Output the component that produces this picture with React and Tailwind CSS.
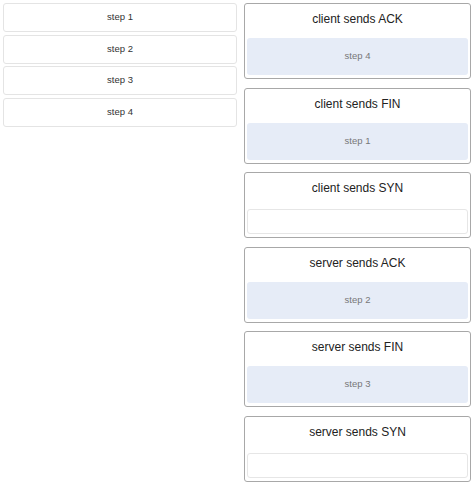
import React from "react";

const leftItems = ["step 1", "step 2", "step 3", "step 4"];
const cards = [
  { title: "client sends ACK", step: "step 4" },
  { title: "client sends FIN", step: "step 1" },
  { title: "client sends SYN", step: null },
  { title: "server sends ACK", step: "step 2" },
  { title: "server sends FIN", step: "step 3" },
  { title: "server sends SYN", step: null },
];

export default function App() {
  return (
    <div
      className="w-[474px] h-[484px] bg-white flex items-start gap-[7px] pl-[3px] pt-[3px]"
      style={{ fontFamily: '"Liberation Sans", Arial, sans-serif' }}
    >
      <div className="w-[234px] flex flex-col gap-[2.5px]">
        {leftItems.map((s) => (
          <div
            key={s}
            className="h-[29px] border border-[#e4e4e4] rounded-[3px] bg-white flex items-center justify-center text-[9.5px] text-[#333]"
          >
            {s}
          </div>
        ))}
      </div>
      <div className="w-[227px] flex flex-col gap-[8.5px]">
        {cards.map((c) => (
          <div
            key={c.title}
            className="border border-[#a8a8a8] rounded-[3px] bg-white px-[2px] flex flex-col"
          >
            <div className="h-[30px] flex items-center justify-center text-[12px] text-[#222]">
              {c.title}
            </div>
            {c.step ? (
              <div className="mt-[4px] mb-[3px] h-[37px] rounded-[3px] bg-[#e6ecf7] flex items-center justify-center text-[9.5px] text-[#777]">
                {c.step}
              </div>
            ) : (
              <div className="mt-[6px] mb-[3px] h-[25px] rounded-[3px] border border-[#e6e6e6] bg-white" />
            )}
          </div>
        ))}
      </div>
    </div>
  );
}
